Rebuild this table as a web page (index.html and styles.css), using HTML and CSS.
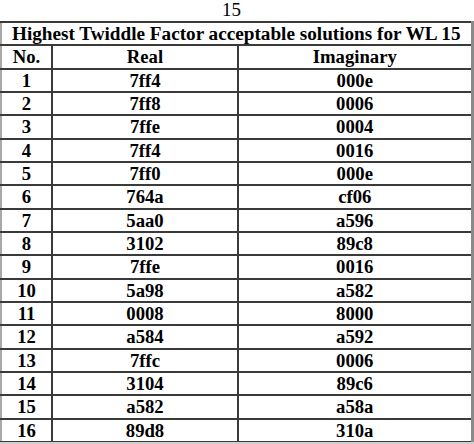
FILE: index.html
```html
<!DOCTYPE html>
<html>
<head>
<meta charset="utf-8">
<link rel="stylesheet" href="styles.css">
</head>
<body>
<div class="page">
  <div class="pagenum">15</div>
  <table class="tw">
    <colgroup>
      <col class="c-no">
      <col class="c-re">
      <col class="c-im">
    </colgroup>
    <tr class="title"><td colspan="3">Highest Twiddle Factor acceptable solutions for WL 15</td></tr>
    <tr><td>No.</td><td>Real</td><td>Imaginary</td></tr>
    <tr><td>1</td><td>7ff4</td><td>000e</td></tr>
    <tr><td>2</td><td>7ff8</td><td>0006</td></tr>
    <tr><td>3</td><td>7ffe</td><td>0004</td></tr>
    <tr><td>4</td><td>7ff4</td><td>0016</td></tr>
    <tr><td>5</td><td>7ff0</td><td>000e</td></tr>
    <tr><td>6</td><td>764a</td><td>cf06</td></tr>
    <tr><td>7</td><td>5aa0</td><td>a596</td></tr>
    <tr><td>8</td><td>3102</td><td>89c8</td></tr>
    <tr><td>9</td><td>7ffe</td><td>0016</td></tr>
    <tr><td>10</td><td>5a98</td><td>a582</td></tr>
    <tr><td>11</td><td>0008</td><td>8000</td></tr>
    <tr><td>12</td><td>a584</td><td>a592</td></tr>
    <tr><td>13</td><td>7ffc</td><td>0006</td></tr>
    <tr><td>14</td><td>3104</td><td>89c6</td></tr>
    <tr><td>15</td><td>a582</td><td>a58a</td></tr>
    <tr><td>16</td><td>89d8</td><td>310a</td></tr>
  </table>
  <div class="bottom-strip"></div>
</div>
</body>
</html>
```
FILE: styles.css
```css
html, body {
  margin: 0;
  padding: 0;
  background: #ffffff;
}
.page {
  width: 474px;
  height: 444px;
  overflow: hidden;
  position: relative;
  font-family: "Liberation Serif", "Times New Roman", serif;
  color: #000;
}
.pagenum {
  height: 21px;
  text-align: center;
  font-size: 19px;
  line-height: 20px;
  padding-right: 11px;
}
.tw {
  border-collapse: collapse;
  width: 473px;
  table-layout: fixed;
  font-weight: bold;
  font-size: 18.7px;
}
.c-no { width: 51px; }
.c-re { width: 186px; }
.c-im { width: 234px; }
.tw td {
  border-top: 2px solid #3a3a3a;
  border-bottom: 2px solid #3a3a3a;
  border-left: 2px solid #3a3a3a;
  text-align: center;
  padding: 1px 0 0 0;
  height: 20.33px;
  line-height: 20px;
}
.tw tr td:first-child {
  border-left: 2px solid #a8a8a8;
}
.tw tr td:last-child {
  border-right: 3px solid #8a8a8a;
}
.tw tr.title td {
  font-size: 19.2px;
}
.bottom-strip {
  position: absolute;
  left: 0;
  right: 0;
  bottom: 0;
  height: 2px;
  background: #cfcfcf;
}
```
